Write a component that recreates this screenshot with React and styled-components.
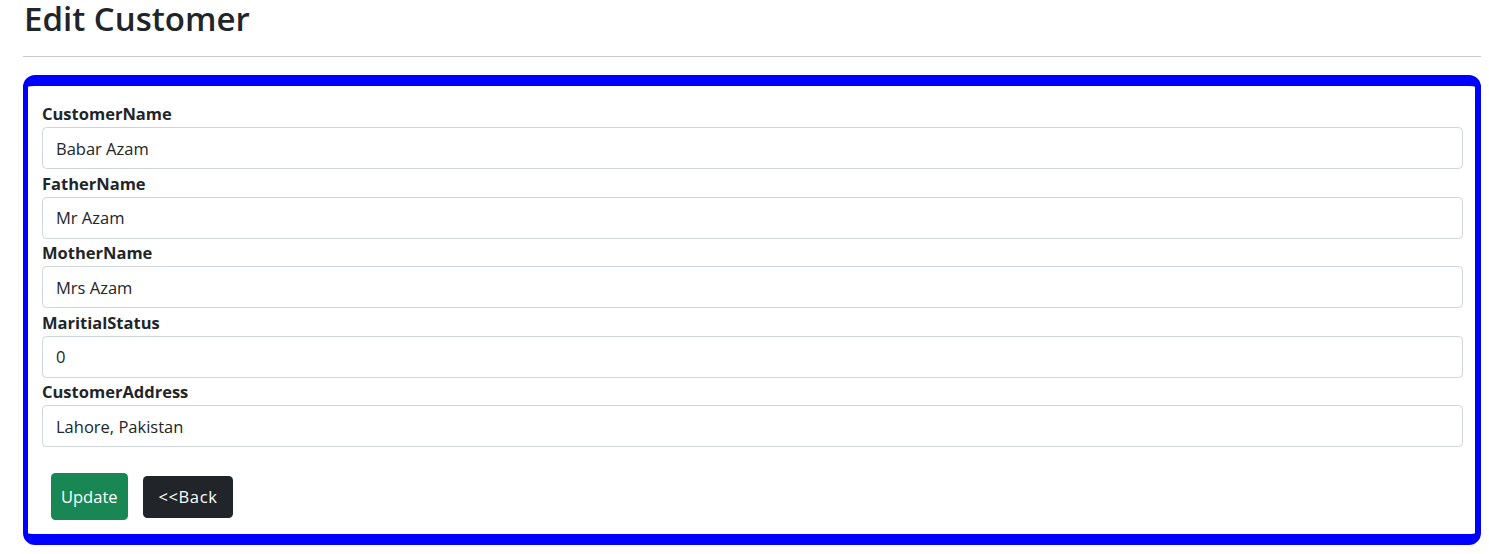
import React from 'react'
import styled, { createGlobalStyle } from 'styled-components'

const GlobalStyle = createGlobalStyle`
  body {
    margin: 0;
    background: #fff;
    color: #212529;
    font-family: "Open Sans", "Noto Sans", sans-serif;
  }
`

const fields = [
    { label: 'CustomerName', value: 'Babar Azam' },
    { label: 'FatherName', value: 'Mr Azam' },
    { label: 'MotherName', value: 'Mrs Azam' },
    { label: 'MaritialStatus', value: '0' },
    { label: 'CustomerAddress', value: 'Lahore, Pakistan' },
]

export default function App() {
    return (
        <Page>
            <GlobalStyle />
            <Title>Edit Customer</Title>
            <Rule />
            <FormBox>
                {fields.map((f) => (
                    <Group key={f.label}>
                        <Label>{f.label}</Label>
                        <Input defaultValue={f.value} />
                    </Group>
                ))}
                <Actions>
                    <Button variant="success">Update</Button>
                    <Button variant="dark">&lt;&lt;Back</Button>
                </Actions>
            </FormBox>
        </Page>
    )
}

const Page = styled.div`
	padding: 0 8px 0 23px;
`

const Title = styled.h2`
	margin: 0 0 0 1px;
	font-size: 33px;
	font-weight: 600;
	line-height: 37px;
	color: #212529;
`

const Rule = styled.hr`
	margin: 19px 0 18px;
	border: 0;
	border-top: 1px solid #c9cacb;
`

const FormBox = styled.div`
	border-style: solid;
	border-color: #0000ff;
	border-width: 11px 6px 11px 5px;
	border-radius: 12px;
	padding: 15px 12px 14px 14px;
`

const Group = styled.div`
	margin-bottom: 1.3px;
`

const Label = styled.label`
	display: block;
	font-size: 16.5px;
	font-weight: 700;
	line-height: 26.4px;
	color: #212529;
`

const Input = styled.input`
	display: block;
	width: 100%;
	box-sizing: border-box;
	height: 41.8px;
	padding: 0 13px;
	font-family: inherit;
	font-size: 16.5px;
	color: #212529;
	background: #fff;
	border: 1px solid #ced4da;
	border-radius: 4.4px;
	outline: none;
`

const Actions = styled.div`
	display: flex;
	align-items: center;
	gap: 15px;
	margin-top: 26px;
	padding-left: 9px;
`

const Button = styled.button`
	font-family: inherit;
	font-size: 16.5px;
	color: #fff;
	border: 1px solid transparent;
	border-radius: 4.4px;
	cursor: pointer;
	${({ variant }) => variant === 'success' ? `
		background: #198754;
		height: 47px;
		padding: 0 9px;
	` : `
		background: #212529;
		height: 42px;
		padding: 0 15px;
		letter-spacing: 0.6px;
	`}
`
